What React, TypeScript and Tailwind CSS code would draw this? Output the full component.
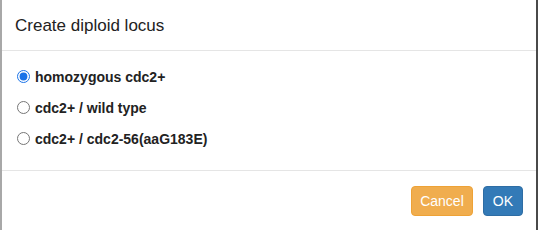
import { useState } from "react";

const OPTIONS = ["homozygous cdc2+", "cdc2+ / wild type", "cdc2+ / cdc2-56(aaG183E)"];

export default function App() {
  const [choice, setChoice] = useState(0);

  return (
    <div className="flex h-[230px] w-[540px] bg-white font-['Liberation_Sans',Arial,sans-serif] text-[#333]">
      <div className="flex h-full w-[538px] flex-col border-l-2 border-r-2 border-l-[#a8a8a8] border-r-[#4a4a4a] bg-white">
        <div className="flex h-[51px] items-center border-b border-[#e5e5e5] px-[13px]">
          <h4 className="text-[17px] leading-none text-[#222]">Create diploid locus</h4>
        </div>

        <div className="flex h-[120px] flex-col gap-[14px] border-b border-[#e5e5e5] px-[15px] pt-[17px]">
          {OPTIONS.map((label, i) => (
            <label key={label} className="flex h-[17px] items-center gap-[5px] text-[14px] font-bold leading-none text-[#222]">
              <input
                type="radio"
                name="locus"
                checked={choice === i}
                onChange={() => setChoice(i)}
                className="m-0 h-[13px] w-[13px] accent-[#1a73e8]"
              />
              {label}
            </label>
          ))}
        </div>

        <div className="flex flex-1 items-start justify-end gap-[10px] pr-[13px] pt-[15px]">
          <button className="h-[30px] rounded-[4px] border border-[#eea236] bg-[#f0ad4e] px-[8px] text-[14px] text-white">
            Cancel
          </button>
          <button className="h-[30px] rounded-[4px] border border-[#2e6da4] bg-[#337ab7] px-[9px] text-[14px] text-white">
            OK
          </button>
        </div>
      </div>
    </div>
  );
}
